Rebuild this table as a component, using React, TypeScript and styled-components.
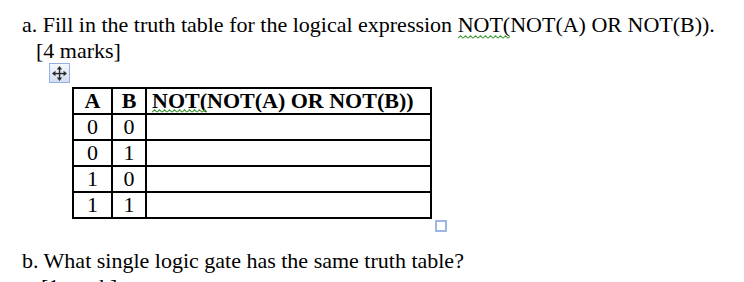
import React from 'react'
import styled, { createGlobalStyle } from 'styled-components'

const Global = createGlobalStyle`
  html, body {
    margin: 0;
    padding: 0;
    background: #fff;
  }
`

const Page = styled.div`
  width: 744px;
  height: 282px;
  overflow: hidden;
  box-sizing: border-box;
  padding: 12px 0 0 22px;
  font-family: "Liberation Serif", "Times New Roman", serif;
  font-size: 22px;
  line-height: 26px;
  color: #000;
`

const Para = styled.div<{ indent?: number; gap?: number }>`
  padding-left: ${p => p.indent || 0}px;
  margin-top: ${p => p.gap || 0}px;
  white-space: nowrap;
`

// green grammar squiggle under a word, drawn as an overlay
const Flagged = styled.span`
  position: relative;
  display: inline-block;

  svg {
    position: absolute;
    left: 0;
    bottom: -1px;
    width: 100%;
    height: 4px;
  }
`

const TableWrap = styled.div`
  position: relative;
  margin: 23px 0 0 50px;
  width: 360px;
`

const MoveHandle = styled.div`
  position: absolute;
  left: -23px;
  top: -24px;
  width: 21px;
  height: 20px;
  box-sizing: border-box;
  border: 1px solid #95b0e0;
  background: linear-gradient(#f4f7fc, #d3def2);
  display: flex;
  align-items: center;
  justify-content: center;
`

const SizeHandle = styled.div`
  position: absolute;
  right: -15px;
  bottom: -13px;
  width: 12px;
  height: 12px;
  box-sizing: border-box;
  border: 2px solid #9db6e6;
  background: #fff;
`

const Truth = styled.table`
  border-collapse: collapse;
  width: 360px;
  table-layout: fixed;
  border: 2px solid #000;
`

const Cell = styled.td<{ head?: boolean; wide?: boolean }>`
  border: 2px solid #000;
  height: 24px;
  padding: 0 ${p => (p.wide ? '5px' : '0')};
  font-weight: ${p => (p.head ? 'bold' : 'normal')};
  text-align: ${p => (p.wide ? 'left' : 'center')};
  vertical-align: middle;
  line-height: 22px;
  white-space: nowrap;
`

const rows = [
  ['0', '0'],
  ['0', '1'],
  ['1', '0'],
  ['1', '1'],
]

let squiggleId = 0

function Squiggle({ children }: { children: React.ReactNode }) {
  const id = React.useMemo(() => `sq${squiggleId++}`, [])
  return (
    <Flagged>
      {children}
      <svg>
        <defs>
          <pattern id={id} width="5" height="4" patternUnits="userSpaceOnUse">
            <path d="M0 3.2 L2.5 0.8 L5 3.2" fill="none" stroke="#3f9b35" strokeWidth="1.1" />
          </pattern>
        </defs>
        <rect width="100%" height="4" fill={`url(#${id})`} />
      </svg>
    </Flagged>
  )
}

function Cross() {
  return (
    <svg width="15" height="15" viewBox="0 0 14 14">
      <g fill="#2a2a2a">
        <rect x="6.4" y="2" width="1.3" height="10" />
        <rect x="2" y="6.4" width="10" height="1.3" />
        <path d="M7 0 L9.5 3.2 H4.5 Z" />
        <path d="M7 14 L9.5 10.8 H4.5 Z" />
        <path d="M0 7 L3.2 4.5 V9.5 Z" />
        <path d="M14 7 L10.8 4.5 V9.5 Z" />
      </g>
    </svg>
  )
}

export default function App() {
  return (
    <Page>
      <Global />
      <Para>
        a. Fill in the truth table for the logical expression <Squiggle>NOT(</Squiggle>NOT(A) OR NOT(B)).
      </Para>
      <Para indent={14}>[4 marks]</Para>
      <TableWrap>
        <MoveHandle>
          <Cross />
        </MoveHandle>
        <Truth>
          <colgroup>
            <col style={{ width: 39 }} />
            <col style={{ width: 34 }} />
            <col />
          </colgroup>
          <tbody>
            <tr>
              <Cell head>A</Cell>
              <Cell head>B</Cell>
              <Cell head wide>
                <Squiggle>NOT(</Squiggle>NOT(A) OR NOT(B))
              </Cell>
            </tr>
            {rows.map((r, i) => (
              <tr key={i}>
                <Cell>{r[0]}</Cell>
                <Cell>{r[1]}</Cell>
                <Cell wide />
              </tr>
            ))}
          </tbody>
        </Truth>
        <SizeHandle />
      </TableWrap>
      <Para gap={29}>b. What single logic gate has the same truth table?</Para>
      <Para indent={19}>[1 mark]</Para>
    </Page>
  )
}
